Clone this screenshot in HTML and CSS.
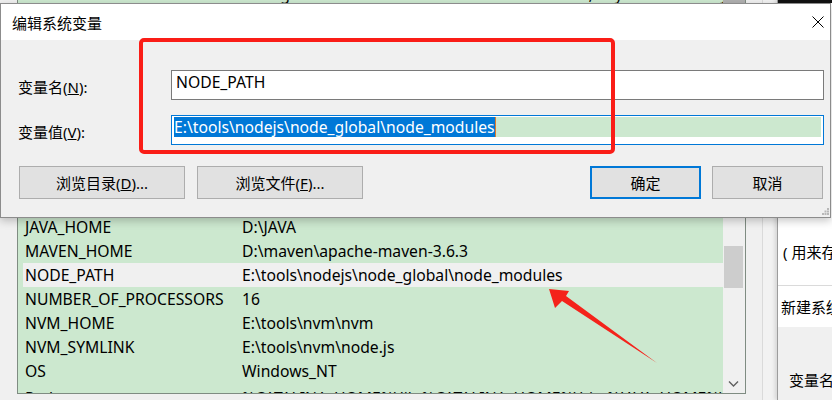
FILE: index.html
```html
<!DOCTYPE html>
<html lang="zh-CN">
<head>
    <meta charset="UTF-8">
    <title>编辑系统变量</title>
    <link rel="stylesheet" href="styles.css">
</head>
<body>
    <div class="desk">
        <div class="pane-list">
            <div class="listbox">
                <div class="rows">
                    <div class="row cut"><span class="k">PSModulePath</span><span class="v">%ProgramFiles%\WindowsPowerShell\Modules;%SystemRoot%\system32\WindowsPowerShell\v1.0\Modules</span></div>
                    <div class="spacer"></div>
                    <div class="row"><span class="k">JAVA_HOME</span><span class="v">D:\JAVA</span></div>
                    <div class="row"><span class="k">MAVEN_HOME</span><span class="v">D:\maven\apache-maven-3.6.3</span></div>
                    <div class="row sel"><span class="k">NODE_PATH</span><span class="v">E:\tools\nodejs\node_global\node_modules</span></div>
                    <div class="row"><span class="k">NUMBER_OF_PROCESSORS</span><span class="v">16</span></div>
                    <div class="row"><span class="k">NVM_HOME</span><span class="v">E:\tools\nvm\nvm</span></div>
                    <div class="row"><span class="k">NVM_SYMLINK</span><span class="v">E:\tools\nvm\node.js</span></div>
                    <div class="row"><span class="k">OS</span><span class="v">Windows_NT</span></div>
                    <div class="row last"><span class="k">Path</span><span class="v">%CATALINA_HOME%\lib;%CATALINA_HOME%\bin;%JAVA_HOME%\bin;%JAVA_HOME%\jre\bin</span></div>
                </div>
                <div class="vscroll">
                    <div class="vscroll-cap"></div>
                    <div class="thumb"></div>
                    <svg class="down" width="22" height="17" viewBox="0 0 22 17">
                        <path d="M6 5.5 L10.5 10 L15 5.5" fill="none" stroke="#606060" stroke-width="1.4"/>
                    </svg>
                </div>
            </div>
        </div>
        <div class="gutter"></div>
        <div class="pane-side">
            <div class="side-cap"></div>
            <div class="side-a">( 用来存储</div>
            <div class="side-b">新建系统变量</div>
            <div class="side-c">变量名</div>
        </div>
    </div>

    <div class="dialog">
        <div class="titlebar">
            <span class="title">编辑系统变量</span>
            <svg class="close" width="12" height="12" viewBox="0 0 12 12">
                <path d="M0.5 0.5 L11.5 11.5 M11.5 0.5 L0.5 11.5" stroke="#000" stroke-width="1"/>
            </svg>
        </div>
        <div class="dlg-body">
            <div class="form">
                <label class="lbl">变量名(<u>N</u>):</label>
                <div class="field"><span class="field-text">NODE_PATH</span></div>
                <label class="lbl">变量值(<u>V</u>):</label>
                <div class="field focus"><span class="field-text green"><span class="selected">E:\tools\nodejs\node_global\node_modules</span><span class="caret"></span></span></div>
            </div>
            <div class="buttons">
                <button class="btn">浏览目录(<u>D</u>)...</button>
                <button class="btn">浏览文件(<u>F</u>)...</button>
                <button class="btn small default">确定</button>
                <button class="btn small">取消</button>
            </div>
        </div>
        <svg class="grip" width="7" height="7" viewBox="0 0 7 7">
            <rect x="5" y="0" width="2" height="2" fill="#b8b8b8"/>
            <rect x="2.5" y="2.5" width="2" height="2" fill="#b8b8b8"/>
            <rect x="5" y="2.5" width="2" height="2" fill="#b8b8b8"/>
            <rect x="0" y="5" width="2" height="2" fill="#b8b8b8"/>
            <rect x="2.5" y="5" width="2" height="2" fill="#b8b8b8"/>
            <rect x="5" y="5" width="2" height="2" fill="#b8b8b8"/>
        </svg>
    </div>

    <div class="mark-box"></div>
    <svg class="mark-arrow" width="832" height="400" viewBox="0 0 832 400">
        <polygon points="549,289 569,291 566,296 657,363 562,301 555,308" fill="#f4231b"/>
    </svg>
</body>
</html>
```

FILE: styles.css
```css
body {
    margin: 0;
    width: 832px;
    height: 400px;
    overflow: hidden;
    position: relative;
    background-color: #f0f0f0;
    font-family: 'Noto Sans', 'Noto Sans CJK SC', sans-serif;
    color: #000;
}

/* window behind the dialog */
.desk {
    display: flex;
    height: 400px;
}

.pane-list {
    width: 746px;
    padding-left: 17px;
    box-sizing: border-box;
}

.listbox {
    display: flex;
    height: 394px;
    border: 1px solid #7f8c82;
    border-top: none;
    box-sizing: border-box;
    overflow: hidden;
}

.rows {
    width: 705px;
    background-color: #cce8cf;
    overflow: hidden;
    font-size: 15.7px;
}

.row {
    display: flex;
    height: 24px;
    align-items: center;
    margin-left: 5px;
    padding-left: 2px;
    white-space: nowrap;
}

.row.cut {
    margin-top: -18px;
}

.row.last {
    padding-top: 3px;
}

.row.sel {
    background-color: #f0f0f0;
}

.row .k {
    width: 217px;
    flex-shrink: 0;
}

.spacer {
    height: 209px;
}

.vscroll {
    width: 22px;
    background-color: #f0f0f0;
    display: flex;
    flex-direction: column;
}

.vscroll-cap {
    height: 3px;
    background-color: #b0b0b0;
}

.thumb {
    margin-top: 243px;
    margin-left: 1px;
    width: 19px;
    height: 42px;
    background-color: #cdcdcd;
}

.down {
    margin-top: auto;
    display: block;
}

.gutter {
    width: 31px;
    background: linear-gradient(to right, #f0f0f0 16px, #dadada 16px, #dadada 17px, #f2f2f2 17px);
}

.pane-side {
    flex: 1;
    border-left: 1px solid #9c9c9c;
    box-shadow: -2px 0 4px rgba(0, 0, 0, 0.12);
    background-color: #fff;
    display: flex;
    flex-direction: column;
    overflow: hidden;
    white-space: nowrap;
    font-size: 15px;
    line-height: 20px;
}

.side-cap {
    height: 3px;
    background-color: #111;
}

.side-a {
    height: 283px;
    padding: 239px 0 0 5px;
    box-sizing: border-box;
    border-bottom: 1px solid #dadada;
}

.side-b {
    height: 41px;
    padding: 11px 0 0 3px;
    box-sizing: border-box;
}

.side-c {
    flex: 1;
    background-color: #f0f0f0;
    padding: 43px 0 0 11px;
}

/* dialog */
.dialog {
    position: absolute;
    left: 0;
    top: 3px;
    width: 831px;
    height: 215px;
    box-sizing: border-box;
    border: 1px solid #8c8c8c;
    background-color: #f0f0f0;
    box-shadow: 0 3px 8px rgba(0, 0, 0, 0.22);
    font-size: 15px;
}

.titlebar {
    height: 36px;
    background-color: #fff;
    display: flex;
    align-items: center;
    padding: 0 6px 0 11px;
}

.title {
    flex: 1;
}

.close {
    display: block;
}

.dlg-body {
    padding: 30px 6px 0 17px;
}

.form {
    display: grid;
    grid-template-columns: 153px 1fr;
    row-gap: 15px;
    align-items: center;
}

.lbl {
    padding-top: 2px;
}

.field {
    height: 30px;
    box-sizing: border-box;
    border: 1px solid #7a7a7a;
    background-color: #fff;
    padding: 1px 2px 0 2px;
}

.field.focus {
    border-color: #0078d7;
}

.field-text {
    display: flex;
    height: 20px;
    line-height: 20px;
    padding-left: 2px;
    white-space: nowrap;
    font-size: 15.7px;
}

.field-text.green {
    background-color: #cce8cf;
    padding-left: 0;
}

.selected {
    background-color: #0078d7;
    color: #fff;
}

.caret {
    width: 1px;
    background-color: #e07a2c;
}

.buttons {
    display: flex;
    gap: 12px;
    margin-top: 21px;
    padding: 0 1px 0 1px;
}

.btn {
    width: 166px;
    height: 33px;
    background-color: #e1e1e1;
    border: 1px solid #adadad;
    font-family: inherit;
    font-size: 15px;
    color: #000;
    padding: 0;
}

.btn.small {
    width: 111px;
}

.btn.default {
    margin-left: auto;
    margin-right: -1px;
    border: 2px solid #0078d7;
}

.grip {
    position: absolute;
    right: 1px;
    bottom: 2px;
}

/* annotations drawn over the screenshot */
.mark-box {
    position: absolute;
    left: 139px;
    top: 38px;
    width: 476px;
    height: 116px;
    box-sizing: border-box;
    border: 4px solid #fa1d17;
    border-radius: 5px;
}

.mark-arrow {
    position: absolute;
    left: 0;
    top: 0;
    pointer-events: none;
}
```
